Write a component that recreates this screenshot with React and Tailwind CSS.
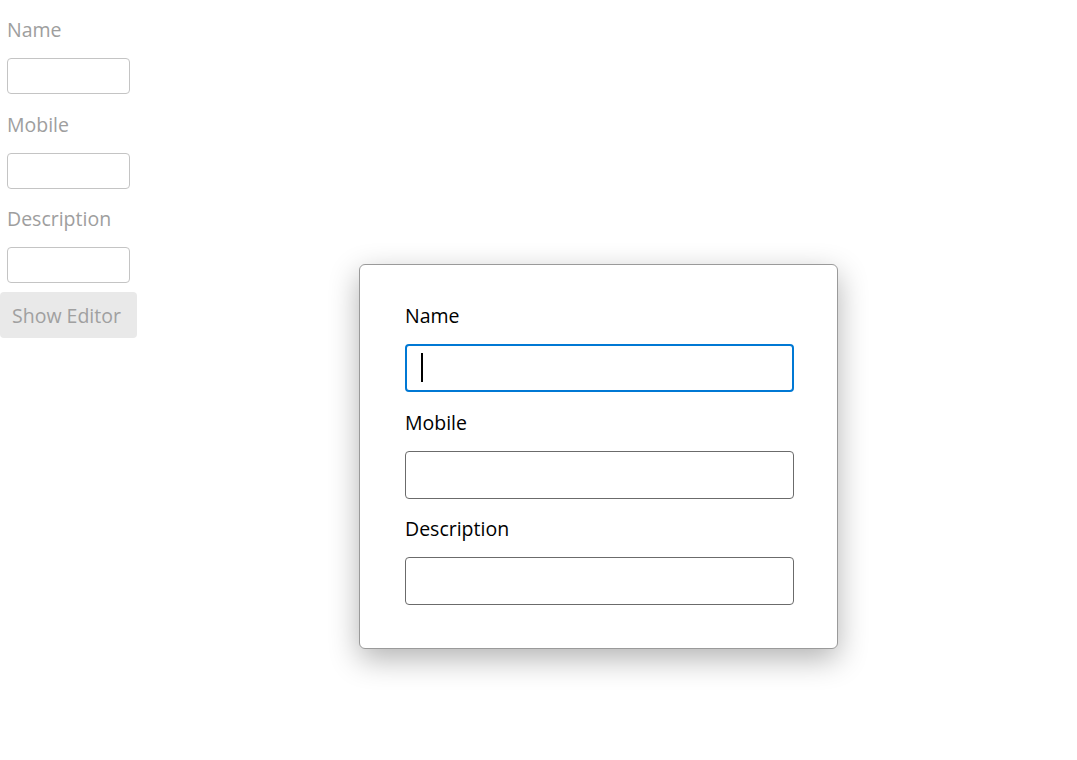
import React from 'react';

const font = { fontFamily: '"Open Sans", "Noto Sans", sans-serif' };

function Field({ label }) {
  return (
    <div className="ml-[7px]">
      <div className="text-[19.5px] leading-7 text-[#9e9e9e] mb-[14px]">{label}</div>
      <input className="block w-[123px] h-9 border border-[#c4c4c4] rounded bg-white mb-[16.5px] outline-none" />
    </div>
  );
}

function DialogField({ label, focused }) {
  return (
    <div>
      <div className="text-[19.5px] leading-7 text-black mb-[14px]">{label}</div>
      <div className="relative mb-[16.5px]">
        <input
          className={
            focused
              ? 'block w-full h-12 border-2 border-[#0078d4] rounded bg-white outline-none'
              : 'block w-full h-12 border border-[#6b6b6b] rounded bg-white outline-none'
          }
        />
        {focused && <span className="absolute left-4 top-[9px] h-[29px] w-[2px] bg-black" />}
      </div>
    </div>
  );
}

export default function App() {
  return (
    <div className="relative w-[1077px] h-[760px] bg-white overflow-hidden" style={font}>
      {/* Background form */}
      <div className="pt-4">
        <Field label="Name" />
        <Field label="Mobile" />
        <Field label="Description" />
        <button className="-mt-[8px] w-[137px] h-[46px] bg-[#e9e9e9] rounded text-[19.5px] text-[#a0a0a0] text-left pl-3 pt-0.5">
          Show Editor
        </button>
      </div>

      {/* Editor dialog */}
      <div className="absolute left-[359px] top-[264px] w-[479px] bg-white border border-[#9a9a9a] rounded-md pl-[45px] pr-[43px] pt-[37px] pb-[26px] shadow-[0_10px_30px_rgba(0,0,0,0.3)]">
        <DialogField label="Name" focused />
        <DialogField label="Mobile" />
        <DialogField label="Description" />
      </div>
    </div>
  );
}
